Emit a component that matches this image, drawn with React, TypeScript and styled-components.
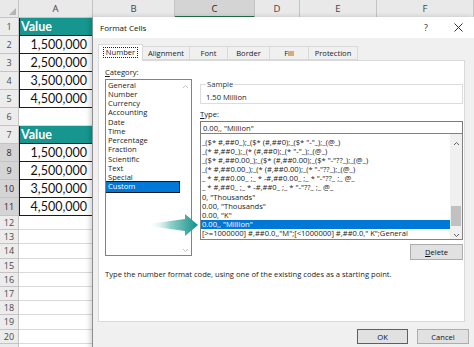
import React from 'react';
import styled, { createGlobalStyle, css } from 'styled-components';

const Global = createGlobalStyle`
  html, body { margin: 0; padding: 0; background: #fff; }
  body { width: 474px; height: 347px; overflow: hidden; }
  #root { width: 474px; height: 347px; overflow: hidden; }
`;

const Page = styled.div`
  position: relative;
  width: 474px;
  height: 347px;
  overflow: hidden;
  font-family: "Open Sans", sans-serif;
`;

/* ---------- spreadsheet ---------- */

const Sheet = styled.div`
  display: grid;
  grid-template-columns: 19px 74px 82px 80px 45px 77px 1fr;
  grid-template-rows: 18px repeat(11, 18px) repeat(10, 14.2px);
`;

type CellKind = 'corner' | 'col' | 'row' | 'blank' | 'head' | 'num';

const Cell = styled.div<{ $kind: CellKind; $sel?: boolean }>`
  box-sizing: border-box;
  position: relative;
  border-right: 1px solid #d9d9d9;
  border-bottom: 1px solid #d9d9d9;
  display: flex;
  align-items: center;
  overflow: hidden;
  white-space: nowrap;

  ${(p) =>
    p.$kind === 'corner' &&
    css`
      background: #e9e9e9;
      border-color: #c4c4c4;
      &::after {
        content: '';
        position: absolute;
        right: 2px;
        bottom: 2px;
        border-left: 7px solid transparent;
        border-bottom: 7px solid #b4b4b4;
      }
    `}

  ${(p) =>
    p.$kind === 'col' &&
    css`
      justify-content: center;
      background: ${p.$sel ? '#d4d4d4' : '#e9e9e9'};
      border-color: #c4c4c4;
      color: ${p.$sel ? '#262626' : '#444'};
      font-size: 9.5px;
      ${p.$sel &&
      css`
        border-bottom: 2px solid #217346;
      `}
    `}

  ${(p) =>
    p.$kind === 'row' &&
    css`
      justify-content: center;
      background: ${p.$sel ? '#d4d4d4' : '#ececec'};
      border-color: #c4c4c4;
      color: ${p.$sel ? '#2a2a2a' : '#4a4a4a'};
      font-size: 9px;
    `}

  ${(p) =>
    p.$kind === 'head' &&
    css`
      background: #17968f;
      color: #fff;
      font-family: Lato, "Open Sans", sans-serif;
      font-weight: 700;
      font-size: 12.5px;
      padding-left: 2px;
      border-right-color: #1a1a1a;
      border-bottom-color: #1a1a1a;
      box-shadow: inset 1px 0 0 #1a1a1a;
    `}

  ${(p) =>
    p.$kind === 'num' &&
    css`
      justify-content: flex-end;
      padding-right: 5px;
      color: #111;
      font-family: Lato, "Open Sans", sans-serif;
      font-size: 12.5px;
      border-right-color: #1a1a1a;
      border-bottom-color: #1a1a1a;
      box-shadow: inset 1px 0 0 #1a1a1a;
    `}
`;

/* ---------- dialog ---------- */

const Dialog = styled.div`
  position: absolute;
  left: 92px;
  top: 17px;
  width: 382px;
  height: 332px;
  box-sizing: border-box;
  border-left: 1px solid #8f8f8f;
  background: #f0f0f0;
  box-shadow: -2px 0 5px rgba(0, 0, 0, 0.18);
  display: flex;
  flex-direction: column;
  font-family: "Open Sans", sans-serif;
  font-size: 7.6px;
  color: #1b1b1b;
`;

const TitleBar = styled.div`
  height: 21px;
  background: #fff;
  display: flex;
  align-items: center;
  padding-left: 7px;
  font-size: 8px;
  color: #111;
`;

const Title = styled.div`
  flex: 1;
`;

const TitleButton = styled.div`
  width: 32px;
  height: 21px;
  display: flex;
  align-items: center;
  justify-content: center;
  color: #333;
  font-size: 9px;
`;

const Body = styled.div`
  flex: 1;
  padding: 6px 5px 0 5px;
  display: flex;
  flex-direction: column;
`;

const TabRow = styled.div`
  display: flex;
  align-items: flex-end;
  height: 16px;
  position: relative;
  z-index: 1;
`;

const Tab = styled.div<{ $w: number; $active?: boolean }>`
  box-sizing: border-box;
  width: ${(p) => p.$w}px;
  height: ${(p) => (p.$active ? 17 : 14)}px;
  margin-bottom: ${(p) => (p.$active ? -1 : 0)}px;
  margin-left: -1px;
  &:first-child {
    margin-left: 0;
  }
  border: 1px solid #d9d9d9;
  border-bottom: ${(p) => (p.$active ? 'none' : '1px solid #d9d9d9')};
  background: ${(p) => (p.$active ? '#fff' : '#f0f0f0')};
  display: flex;
  align-items: center;
  justify-content: center;
  padding-bottom: ${(p) => (p.$active ? 2 : 0)}px;
`;

const FocusBox = styled.span`
  border: 1px dotted #222;
  padding: 0 2px;
  line-height: 9px;
`;

const Panel = styled.div`
  height: 262px;
  box-sizing: border-box;
  background: #fff;
  border: 1px solid #d9d9d9;
  margin-right: 4px;
  padding: 6px 1px 0 6px;
  display: flex;
  flex-direction: column;
`;

const TopArea = styled.div`
  display: flex;
  gap: 8px;
`;

const Column = styled.div<{ $w: number }>`
  width: ${(p) => p.$w}px;
  display: flex;
  flex-direction: column;
`;

const Label = styled.div`
  line-height: 10px;
  margin-bottom: 2px;
`;

const ListBox = styled.div<{ $h: number }>`
  box-sizing: border-box;
  height: ${(p) => p.$h}px;
  border: 1px solid #828282;
  display: flex;
  overflow: hidden;
`;

const CatItems = styled.div`
  flex: 1;
  padding-top: 0.5px;
`;

const CatItem = styled.div<{ $sel?: boolean }>`
  line-height: 9.27px;
  padding-left: 2px;
  ${(p) =>
    p.$sel &&
    css`
      background: #0078d7;
      color: #fff;
      outline: 1px solid #1a1a1a;
    `}
`;

const CatScroll = styled.div`
  width: 12px;
  display: flex;
  flex-direction: column;
  justify-content: space-between;
  align-items: center;
  padding: 4px 0 2px;
  color: #c4c4c4;
`;

const Sample = styled.fieldset`
  margin: 12px 0 0;
  padding: 3px 5px 1px;
  border: 1px solid #dcdcdc;
  line-height: 10px;
`;

const Legend = styled.legend`
  padding: 0 1px;
  line-height: 10px;
  color: #333;
`;

const TypeLabel = styled(Label)`
  margin-top: 5px;
`;

const InputBox = styled.div`
  box-sizing: border-box;
  height: 13px;
  border: 1px solid #7a7a7a;
  padding-left: 2px;
  display: flex;
  align-items: center;
  white-space: nowrap;
`;

const TypeList = styled(ListBox)`
  margin-top: -1px;
`;

const TypeItems = styled.div`
  flex: 1;
  padding-top: 4px;
  overflow: hidden;
`;

const TypeItem = styled.div<{ $sel?: boolean }>`
  line-height: 9.1px;
  padding-left: 1px;
  white-space: nowrap;
  ${(p) =>
    p.$sel &&
    css`
      background: #0078d7;
      color: #fff;
    `}
`;

const TypeScroll = styled.div`
  width: 12px;
  background: #f0f0f0;
  display: flex;
  flex-direction: column;
  align-items: center;
  padding: 7px 0 1px;
  color: #606060;
`;

const Spacer = styled.div`
  flex: 1;
`;

const Thumb = styled.div`
  width: 10px;
  height: 20px;
  background: #c1c1c1;
  margin-bottom: 7px;
`;

const Button = styled.div<{ $w: number; $primary?: boolean }>`
  box-sizing: border-box;
  width: ${(p) => p.$w}px;
  height: 15px;
  background: #e1e1e1;
  border: 1px solid ${(p) => (p.$primary ? '#0078d7' : '#adadad')};
  display: flex;
  align-items: center;
  justify-content: center;
  color: #111;
`;

const DeleteButton = styled(Button)`
  height: 16px;
  margin-top: 4px;
  align-self: flex-end;
`;

const Description = styled.div`
  margin-top: 9px;
  line-height: 10px;
`;

const Footer = styled.div`
  display: flex;
  justify-content: flex-end;
  gap: 9px;
  padding-top: 7px;
`;

const Arrow = styled.svg`
  position: absolute;
  left: 145px;
  top: 212px;
`;

/* ---------- data ---------- */

const colLetters = ['A', 'B', 'C', 'D', 'E', 'F'];

const aValues: Record<number, { kind: CellKind; text: string }> = {
  1: { kind: 'head', text: 'Value' },
  2: { kind: 'num', text: '1,500,000' },
  3: { kind: 'num', text: '2,500,000' },
  4: { kind: 'num', text: '3,500,000' },
  5: { kind: 'num', text: '4,500,000' },
  7: { kind: 'head', text: 'Value' },
  8: { kind: 'num', text: '1,500,000' },
  9: { kind: 'num', text: '2,500,000' },
  10: { kind: 'num', text: '3,500,000' },
  11: { kind: 'num', text: '4,500,000' },
};

const categories = [
  'General',
  'Number',
  'Currency',
  'Accounting',
  'Date',
  'Time',
  'Percentage',
  'Fraction',
  'Scientific',
  'Text',
  'Special',
  'Custom',
];

const codes = [
  '_($* #,##0_);_($* (#,##0);_($* "-"_);_(@_)',
  '_(* #,##0_);_(* (#,##0);_(* "-"_);_(@_)',
  '_($* #,##0.00_);_($* (#,##0.00);_($* "-"??_);_(@_)',
  '_(* #,##0.00_);_(* (#,##0.00);_(* "-"??_);_(@_)',
  '_ * #,##0.00_ ;_ * -#,##0.00_ ;_ * "-"??_ ;_ @_ ',
  '_ * #,##0_ ;_ * -#,##0_ ;_ * "-"??_ ;_ @_ ',
  '0, "Thousands"',
  '0.00, "Thousands"',
  '0.00, "K"',
  '0.00,, "Million"',
  '[>=1000000] #,##0.0,,"M";[<1000000] #,##0.0," K";General',
];

const tabs = [
  { label: 'Number', w: 45 },
  { label: 'Alignment', w: 48 },
  { label: 'Font', w: 39 },
  { label: 'Border', w: 43 },
  { label: 'Fill', w: 40 },
  { label: 'Protection', w: 50 },
];

const Chevron = ({ up }: { up?: boolean }) => (
  <svg width="7" height="5" viewBox="0 0 7 5">
    <polyline
      points={up ? '1,4 3.5,1.5 6,4' : '1,1 3.5,3.5 6,1'}
      fill="none"
      stroke="currentColor"
      strokeWidth="1"
    />
  </svg>
);

export default function App() {
  const rows = Array.from({ length: 21 }, (_, i) => i + 1);
  return (
    <Page>
      <Global />
      <Sheet>
        <Cell $kind="corner" />
        {colLetters.map((c) => (
          <Cell key={c} $kind="col" $sel={c === 'C'}>
            {c}
          </Cell>
        ))}
        {rows.map((r) => (
          <React.Fragment key={r}>
            <Cell $kind="row" $sel={r >= 8 && r <= 11}>
              {r <= 20 ? r : ''}
            </Cell>
            <Cell $kind={aValues[r]?.kind ?? 'blank'}>{aValues[r]?.text}</Cell>
            {colLetters.slice(1).map((c) => (
              <Cell key={c} $kind="blank" />
            ))}
          </React.Fragment>
        ))}
      </Sheet>

      <Dialog>
        <TitleBar>
          <Title>Format Cells</Title>
          <TitleButton>?</TitleButton>
          <TitleButton>
            <svg width="9" height="9" viewBox="0 0 9 9">
              <path d="M0.5 0.5 L8.5 8.5 M8.5 0.5 L0.5 8.5" stroke="#333" strokeWidth="1" />
            </svg>
          </TitleButton>
        </TitleBar>
        <Body>
          <TabRow>
            {tabs.map((t, i) => (
              <Tab key={t.label} $w={t.w} $active={i === 0}>
                {i === 0 ? <FocusBox>{t.label}</FocusBox> : t.label}
              </Tab>
            ))}
          </TabRow>
          <Panel>
            <TopArea>
              <Column $w={87}>
                <Label>
                  <u>C</u>ategory:
                </Label>
                <ListBox $h={177}>
                  <CatItems>
                    {categories.map((c) => (
                      <CatItem key={c} $sel={c === 'Custom'}>
                        {c}
                      </CatItem>
                    ))}
                  </CatItems>
                  <CatScroll>
                    <Chevron up />
                    <Chevron />
                  </CatScroll>
                </ListBox>
              </Column>
              <Column $w={263}>
                <Sample>
                  <Legend>Sample</Legend>
                  1.50 Million
                </Sample>
                <TypeLabel>
                  <u>T</u>ype:
                </TypeLabel>
                <InputBox>0.00,, "Million"</InputBox>
                <TypeList $h={107}>
                  <TypeItems>
                    {codes.map((c, i) => (
                      <TypeItem key={i} $sel={i === 9}>
                        {c}
                      </TypeItem>
                    ))}
                  </TypeItems>
                  <TypeScroll>
                    <Chevron up />
                    <Spacer />
                    <Thumb />
                    <Chevron />
                  </TypeScroll>
                </TypeList>
                <DeleteButton $w={53}>
                  <span>
                    <u>D</u>elete
                  </span>
                </DeleteButton>
              </Column>
            </TopArea>
            <Description>
              Type the number format code, using one of the existing codes as a starting point.
            </Description>
          </Panel>
          <Footer>
            <Button $w={51} $primary>
              OK
            </Button>
            <Button $w={52}>Cancel</Button>
          </Footer>
        </Body>
      </Dialog>

      <Arrow width="56" height="26" viewBox="0 0 56 26">
        <defs>
          <linearGradient id="arrowFill" x1="0" y1="0" x2="1" y2="0">
            <stop offset="0" stopColor="#ffffff" stopOpacity="0" />
            <stop offset="0.45" stopColor="#8fd0cb" />
            <stop offset="1" stopColor="#12908a" />
          </linearGradient>
        </defs>
        <path d="M3 12 L40 7 L40 2 L53 13 L40 24 L40 19 L3 14 Z" fill="url(#arrowFill)" />
      </Arrow>
    </Page>
  );
}
